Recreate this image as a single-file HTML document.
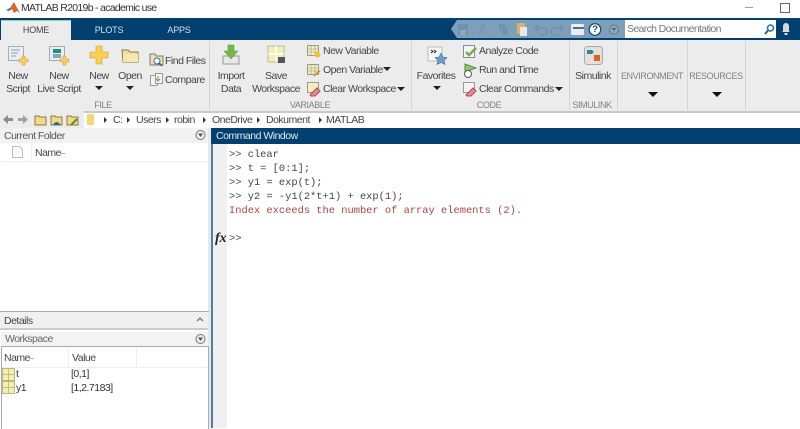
<!DOCTYPE html>
<html><head><meta charset="utf-8"><style>
html,body{margin:0;padding:0}
body{width:800px;height:428px;overflow:hidden;background:#fff;position:relative;font-family:"Liberation Sans",sans-serif;font-size:10.5px;letter-spacing:-.5px;color:#454545}
.a{position:absolute;white-space:nowrap}
.c{position:absolute;white-space:nowrap;text-align:center;transform:translateX(-50%)}
.g{color:#808080;font-size:9px;letter-spacing:-.4px}
.t{position:absolute;width:0;height:0;border-left:4px solid transparent;border-right:4px solid transparent;border-top:4px solid #222}
.T{position:absolute;width:0;height:0;border-left:5px solid transparent;border-right:5px solid transparent;border-top:5px solid #111}
.s{position:absolute;background:#d4d4d4;width:1px;top:41px;height:69px}
.r{position:absolute;width:0;height:0;border-top:3px solid transparent;border-bottom:3px solid transparent;border-left:3.5px solid #333;top:117px}
.m{position:absolute;font-family:"Liberation Mono",monospace;font-size:10.4px;letter-spacing:0;line-height:14px;white-space:pre;color:#444}
svg{position:absolute;overflow:visible}
</style></head><body>
<!-- title -->
<svg style="left:6px;top:2px" width="14" height="12" viewBox="0 0 14 12"><path d="M0 8L4 6L6 3L8 0L10 4L14 11L11 9L8 11L6 7L3 9Z" fill="#d9632a"/><path d="M0 8L4 6L6 7L3 9Z" fill="#3c7fb5"/></svg>
<div class="a" style="left:21px;top:1px;font-size:10.5px;letter-spacing:-.7px;line-height:15px;color:#333">MATLAB R2019b - academic use</div>
<div class="a" style="left:745px;top:7px;width:8px;height:1px;background:#a0a0a0"></div>
<div class="a" style="left:780px;top:3px;width:8px;height:8px;border:1px solid #666"></div>
<!-- tab bar -->
<div class="a" style="left:0;top:18px;width:800px;height:22px;background:#03406f"></div>
<div class="a" style="left:1px;top:20px;width:70px;height:20px;background:#ececec;border-top:1px solid #9cc"></div>
<div class="c" style="left:36px;top:25px;font-size:9px;letter-spacing:-.2px;color:#444">HOME</div>
<div class="c" style="left:109px;top:25px;font-size:9px;letter-spacing:-.2px;color:#cfe0ee">PLOTS</div>
<div class="c" style="left:179px;top:25px;font-size:9px;letter-spacing:-.2px;color:#cfe0ee">APPS</div>
<!-- quick toolbar -->
<svg style="left:450px;top:20px" width="175" height="18"><path d="M7 0H175V18H7L1 9Z" fill="#7d9fba"/>
<rect x="8" y="4" width="10" height="11" fill="#6f92ad"/><rect x="10" y="10" width="6" height="5" fill="#89a8bf"/>
<path d="M34 4l-3 7M31 11l-2 3M34 11l2 3" stroke="#6f92ad" stroke-width="1.500" fill="none"/>
<rect x="49" y="4" width="6" height="7" fill="#6f92ad"/><rect x="52" y="7" width="6" height="8" fill="#6f92ad" stroke="#7d9fba" stroke-width=".5"/>
<rect x="67" y="3" width="8" height="11" fill="#d8b070"/><rect x="70" y="7" width="7" height="9" fill="#e8e8e8"/>
<path d="M85 8h8q4 0 4 3.500T93 15h-4M85 8l3-3M85 8l3 3" stroke="#6d90ab" stroke-width="1.300" fill="none"/>
<path d="M113 8h-8q-4 0-4 3.500t4 3.500h4M113 8l-3-3M113 8l-3 3" stroke="#6d90ab" stroke-width="1.300" fill="none"/>
<rect x="121" y="4" width="13" height="11" rx="1.500" fill="#e8eef2"/><rect x="123" y="7" width="11" height="2" fill="#4f6f88"/>
<circle cx="145" cy="9.500" r="5.800" fill="#fdfdfd" stroke="#174a73" stroke-width="1.200"/>
<circle cx="164" cy="9.500" r="4.500" fill="#93a6b5" stroke="#5f7a90"/><path d="M161.500 8h5l-2.500 3z" fill="#4f6375"/></svg>
<div class="a" style="left:591px;top:23px;width:8px;text-align:center;font-size:9.500px;letter-spacing:0;font-weight:bold;color:#174a73;line-height:13px">?</div>
<div class="a" style="left:625px;top:20px;width:151px;height:18px;background:#fff"></div>
<div class="a" style="left:627px;top:23px;font-size:10.5px;letter-spacing:-.65px;line-height:13px;color:#777">Search Documentation</div>
<svg style="left:764px;top:24px" width="11" height="11"><circle cx="6.500" cy="4" r="3" fill="none" stroke="#2a6ea6" stroke-width="1.500"/><path d="M4 6.500L1 10" stroke="#1f5f96" stroke-width="2"/></svg>
<svg style="left:781px;top:22px" width="10" height="14"><path d="M5 1q3 0 3 4v4l1 1H1l1-1V5q0-4 3-4z" fill="#d9d9d9"/><rect x="3.500" y="11" width="3" height="2" fill="#d9d9d9"/></svg>
<!-- ribbon -->
<div class="a" style="left:0;top:40px;width:800px;height:71px;background:#ececec;border-bottom:2px solid #c9c9c9;box-sizing:content-box"></div>
<div class="s" style="left:209px"></div><div class="s" style="left:411px"></div><div class="s" style="left:569px"></div><div class="s" style="left:617px"></div><div class="s" style="left:687px"></div><div class="s" style="left:745px"></div>
<!-- ribbon icons -->
<svg style="left:8px;top:46px" width="20" height="20"><rect x=".5" y=".5" width="15" height="14" fill="#e9eef2" stroke="#a5adb3"/><path d="M3 4h9M3 7h7M3 10h5" stroke="#8aa0b0"/><path d="M14 10h3v3h3v3h-3v3h-3v-3h-3v-3h3z" fill="#f5cf60" stroke="#c49a30" stroke-width=".5"/></svg>
<svg style="left:49px;top:46px" width="20" height="20"><rect x=".5" y=".5" width="15" height="14" fill="#e9eef2" stroke="#a5adb3"/><rect x="4" y="3" width="8" height="4" fill="#2a8f70"/><rect x="4" y="8" width="8" height="4" fill="#7fa8c0"/><path d="M14 10h3v3h3v3h-3v3h-3v-3h-3v-3h3z" fill="#f5cf60" stroke="#c49a30" stroke-width=".5"/></svg>
<svg style="left:90px;top:46px" width="18" height="18"><path d="M6 0h6v6h6v6h-6v6H6v-6H0V6h6z" fill="#f6cf55" stroke="#cfa030" stroke-width=".6"/></svg>
<svg style="left:121px;top:49px" width="18" height="14"><path d="M1 1h6l2 2h8v10H2z" fill="#f2dc9a" stroke="#8f7a40"/><path d="M2 5h15v8H2z" fill="#f6e7b0"/></svg>
<svg style="left:149px;top:53px" width="15" height="14"><path d="M1 1h5l1 2h7v9H1z" fill="#f0dfae" stroke="#777"/><circle cx="8" cy="8" r="3" fill="#fff" stroke="#2a6ea6"/><path d="M10 10l3 3" stroke="#555" stroke-width="1.500"/></svg>
<svg style="left:150px;top:73px" width="14" height="14"><rect x=".5" y="2.500" width="7" height="10" fill="#f4f4f4" stroke="#999"/><rect x="5.500" y=".5" width="7" height="10" fill="#f4f4f4" stroke="#999"/><path d="M8 3v5M6 6l2 2 2-2" stroke="#a8864a" fill="none"/></svg>
<svg style="left:222px;top:45px" width="18" height="20"><rect x="1" y="11" width="16" height="8" fill="#e8e8e4" stroke="#999"/><path d="M6 0h6v6h4l-7 8-7-8h4z" fill="#79b64a" stroke="#5a9138" stroke-width=".5"/></svg>
<svg style="left:268px;top:46px" width="18" height="18"><rect x="0" y="0" width="16" height="16" fill="#f3eeb5" stroke="#b8b8a0"/><path d="M8 0v16M0 8h16" stroke="#fff" stroke-width="1.500"/><rect x="10" y="11" width="7" height="6" fill="#555"/></svg>
<svg style="left:307px;top:45px" width="14" height="13"><rect x=".5" y=".5" width="11" height="10" fill="#f5eebc" stroke="#9a9a8a"/><path d="M4 .5v10M8 .5v10M.5 4h11M.5 7h11" stroke="#9a9a8a" stroke-width=".6"/><circle cx="10.500" cy="9.500" r="3" fill="#f0c040"/></svg>
<svg style="left:307px;top:64px" width="14" height="13"><rect x=".5" y=".5" width="11" height="10" fill="#f5eebc" stroke="#9a9a8a"/><path d="M4 .5v10M8 .5v10M.5 4h11M.5 7h11" stroke="#9a9a8a" stroke-width=".6"/><path d="M6 12l6-6 1.500 1.500-6 5z" fill="#d8903a"/></svg>
<svg style="left:307px;top:82px" width="14" height="14"><rect x=".5" y=".5" width="11" height="10" fill="#f5eebc" stroke="#9a9a8a"/><path d="M3 13l7-7 3 3-5 5H4z" fill="#e68a96" stroke="#b45"/></svg>
<svg style="left:427px;top:45px" width="22" height="22"><rect x="1" y="2" width="14" height="14" fill="#f6f8fa" stroke="#bbb"/><path d="M4 5l2 1.500-2 1.500M7 5l2 1.500-2 1.500" stroke="#222" fill="none"/><path d="M14 8l2 4 4 .5-3 3 1 4-4-2-4 2 1-4-3-3 4-.5z" fill="#6f9cc8" stroke="#3d6f9f" stroke-width=".6"/></svg>
<svg style="left:463px;top:45px" width="14" height="13"><rect x=".5" y=".5" width="11" height="12" fill="#f4f4f4" stroke="#88a"/><path d="M3 7l3 3 7-7" stroke="#7ca84a" stroke-width="2.500" fill="none"/></svg>
<svg style="left:463px;top:63px" width="14" height="15"><path d="M2 1l11 4-11 4z" fill="#8cc870" stroke="#5a8f40"/><circle cx="5" cy="11" r="3.500" fill="#fff" stroke="#555"/></svg>
<svg style="left:463px;top:82px" width="14" height="14"><rect x=".5" y=".5" width="11" height="10" fill="#f4f4f4" stroke="#999"/><path d="M3 13l7-7 3 3-5 5H4z" fill="#e68a96" stroke="#b45"/></svg>
<svg style="left:584px;top:46px" width="19" height="19"><rect x=".5" y=".5" width="18" height="18" rx="3" fill="#e8e0d8" stroke="#aaa"/><path d="M3 4h5l2 2-2 2H3z" fill="#3a7fa8"/><rect x="10" y="9" width="6" height="6" fill="#d9622b"/></svg>
<!-- ribbon text -->
<div class="c" style="left:18px;top:70px;line-height:13px">New<br>Script</div>
<div class="c" style="left:59px;top:70px;line-height:13px">New<br>Live Script</div>
<div class="c" style="left:99px;top:70px;line-height:13px">New</div><div class="t" style="left:95px;top:86px"></div>
<div class="c" style="left:130px;top:70px;line-height:13px">Open</div><div class="t" style="left:126px;top:86px"></div>
<div class="a" style="left:165px;top:55px;line-height:13px">Find Files</div>
<div class="a" style="left:165px;top:74px;line-height:13px">Compare</div>
<div class="c g" style="left:103px;top:100px">FILE</div>
<div class="c" style="left:231px;top:70px;line-height:13px">Import<br>Data</div>
<div class="c" style="left:276px;top:70px;line-height:13px">Save<br>Workspace</div>
<div class="a" style="left:323px;top:45px;line-height:13px">New Variable</div>
<div class="a" style="left:323px;top:64px;line-height:13px">Open Variable</div><div class="t" style="left:383px;top:67px"></div>
<div class="a" style="left:323px;top:83px;line-height:13px">Clear Workspace</div><div class="t" style="left:397px;top:87px"></div>
<div class="c g" style="left:310px;top:100px">VARIABLE</div>
<div class="c" style="left:436px;top:70px;line-height:13px">Favorites</div><div class="t" style="left:433px;top:86px"></div>
<div class="a" style="left:479px;top:45px;line-height:13px">Analyze Code</div>
<div class="a" style="left:479px;top:64px;line-height:13px">Run and Time</div>
<div class="a" style="left:479px;top:83px;line-height:13px">Clear Commands</div><div class="t" style="left:555px;top:87px"></div>
<div class="c g" style="left:489px;top:100px">CODE</div>
<div class="c" style="left:593px;top:70px;line-height:13px">Simulink</div>
<div class="c g" style="left:592px;top:100px">SIMULINK</div>
<div class="c g" style="left:652px;top:71px">ENVIRONMENT</div><div class="T" style="left:648px;top:92px"></div>
<div class="c g" style="left:716px;top:71px">RESOURCES</div><div class="T" style="left:712px;top:92px"></div>
<!-- path bar -->
<div class="a" style="left:0;top:113px;width:800px;height:15px;background:#fff"></div>
<div class="a" style="left:0;top:111px;width:84px;height:17px;background:#ececec"></div>
<svg style="left:2px;top:114px" width="28" height="11"><path d="M1 5.500L6 1v3h5v3H6v3z" fill="#8c8c8c"/><path d="M26 5.500L21 1v3h-5v3h5v3z" fill="#a0a0a0"/></svg>
<svg style="left:34px;top:114px" width="48" height="12"><path d="M1 2h4l1 1h6v8H1z" fill="#f2d98a" stroke="#8a7a3a"/><path d="M17 2h4l1 1h6v8H17z" fill="#f2d98a" stroke="#8a7a3a"/><path d="M19 11q3-6 8 0z" fill="#1d66a8"/><path d="M33 2h4l1 1h6v8H33z" fill="#f2d98a" stroke="#8a7a3a"/><path d="M37 11l6-6" stroke="#5a9138" stroke-width="2"/></svg>
<div class="a" style="left:87px;top:114px;width:7px;height:11px;background:#f6d57a"></div>
<div class="r" style="left:104px"></div><div class="a" style="left:113px;top:114px;line-height:13px;color:#444">C:</div>
<div class="r" style="left:127px"></div><div class="a" style="left:136px;top:114px;line-height:13px;color:#444">Users</div>
<div class="r" style="left:166px"></div><div class="a" style="left:174px;top:114px;line-height:13px;color:#444">robin</div>
<div class="r" style="left:203px"></div><div class="a" style="left:212px;top:114px;line-height:13px;color:#444">OneDrive</div>
<div class="r" style="left:257px"></div><div class="a" style="left:266px;top:114px;line-height:13px;color:#444">Dokument</div>
<div class="r" style="left:319px"></div><div class="a" style="left:326px;top:114px;line-height:13px;color:#444">MATLAB</div>
<!-- left pane -->
<div class="a" style="left:0;top:128px;width:212px;height:300px;background:#fff"></div>
<div class="a" style="left:0;top:128px;width:208px;height:15px;background:#f1f1f1"></div>
<div class="a" style="left:4px;top:129px;line-height:14px;color:#555">Current Folder</div>
<svg style="left:195px;top:129px" width="12" height="12"><circle cx="5.500" cy="6" r="4.500" fill="#eee" stroke="#777"/><path d="M3 4.500h5l-2.500 3.500z" fill="#555"/></svg>
<div class="a" style="left:1px;top:143px;width:207px;height:18px;border-bottom:1px solid #eee"></div>
<div class="a" style="left:31px;top:143px;width:1px;height:18px;background:#eee"></div>
<svg style="left:12px;top:146px" width="11" height="12"><path d="M.5.5h7l3 3v8H.5z" fill="#fdfdfd" stroke="#bbb"/></svg>
<div class="a" style="left:35px;top:146px;line-height:14px;color:#444">Name</div>
<div class="a" style="left:61px;top:153px;width:4px;height:1px;background:#aaa"></div>
<div class="a" style="left:208px;top:128px;width:3px;height:300px;background:#e8e8e8"></div>
<div class="a" style="left:0;top:311px;width:209px;height:1px;background:#aaa"></div>
<div class="a" style="left:0;top:312px;width:208px;height:16px;background:#f0f0f0;border-bottom:2px solid #ccc"></div>
<div class="a" style="left:4px;top:314px;line-height:14px;color:#444">Details</div>
<svg style="left:195px;top:317px" width="10" height="6"><path d="M2 4l3-3 3 3" stroke="#555" fill="none"/></svg>
<div class="a" style="left:1px;top:332px;width:207px;height:15px;background:#f3f3f3"></div>
<div class="a" style="left:5px;top:332px;line-height:14px;color:#666">Workspace</div>
<svg style="left:195px;top:333px" width="12" height="12"><circle cx="5.500" cy="6" r="4.500" fill="#eee" stroke="#777"/><path d="M3 4.500h5l-2.500 3.500z" fill="#555"/></svg>
<div class="a" style="left:1px;top:346px;width:206px;height:82px;border:1px solid #aaa;border-bottom:0"></div>
<div class="a" style="left:68px;top:347px;width:1px;height:20px;background:#eee"></div>
<div class="a" style="left:136px;top:347px;width:1px;height:20px;background:#eee"></div>
<div class="a" style="left:2px;top:367px;width:205px;height:1px;background:#eee"></div>
<div class="a" style="left:4px;top:351px;line-height:14px;color:#444">Name</div>
<div class="a" style="left:30px;top:358px;width:4px;height:1px;background:#aaa"></div>
<div class="a" style="left:72px;top:351px;line-height:14px;color:#444">Value</div>
<svg style="left:2px;top:368px" width="13" height="26"><g fill="#f6eeaa" stroke="#a8a870" stroke-width=".8"><rect x=".5" y=".5" width="12" height="12"/><rect x=".5" y="13.500" width="12" height="12"/></g><path d="M6.500.5v12M.5 6.500h12M6.500 13.500v12M.5 19.500h12" stroke="#b0b080" stroke-width=".7"/></svg>
<div class="a" style="left:16px;top:367px;line-height:14px;color:#333">t</div>
<div class="a" style="left:16px;top:381px;line-height:14px;color:#333">y1</div>
<div class="a" style="left:71px;top:367px;line-height:14px;color:#333">[0,1]</div>
<div class="a" style="left:71px;top:381px;line-height:14px;color:#333">[1,2.7183]</div>
<!-- command window -->
<div class="a" style="left:211px;top:128px;width:589px;height:300px;background:#fff"></div>
<div class="a" style="left:211px;top:128px;width:589px;height:16px;background:#03406f"></div>
<div class="a" style="left:216px;top:129px;line-height:14px;color:#dfe9f2">Command Window</div>
<div class="a" style="left:211px;top:144px;width:2px;height:284px;background:#4f7fa6"></div>
<div class="a" style="left:213px;top:144px;width:14px;height:284px;background:#f0f0f0"></div>
<div class="m" style="left:229px;top:148px">&gt;&gt; clear
&gt;&gt; t = [0:1];
&gt;&gt; y1 = exp(t);
&gt;&gt; y2 = -y1(2*t+1) + exp(1);
<span style="color:#a94442">Index exceeds the number of array elements (2).</span>

&gt;&gt;</div>
<div class="a" style="left:215px;top:231px;font-family:'Liberation Serif',serif;font-style:italic;font-weight:bold;font-size:14px;letter-spacing:0;line-height:16px;color:#222">fx</div>
</body></html>
